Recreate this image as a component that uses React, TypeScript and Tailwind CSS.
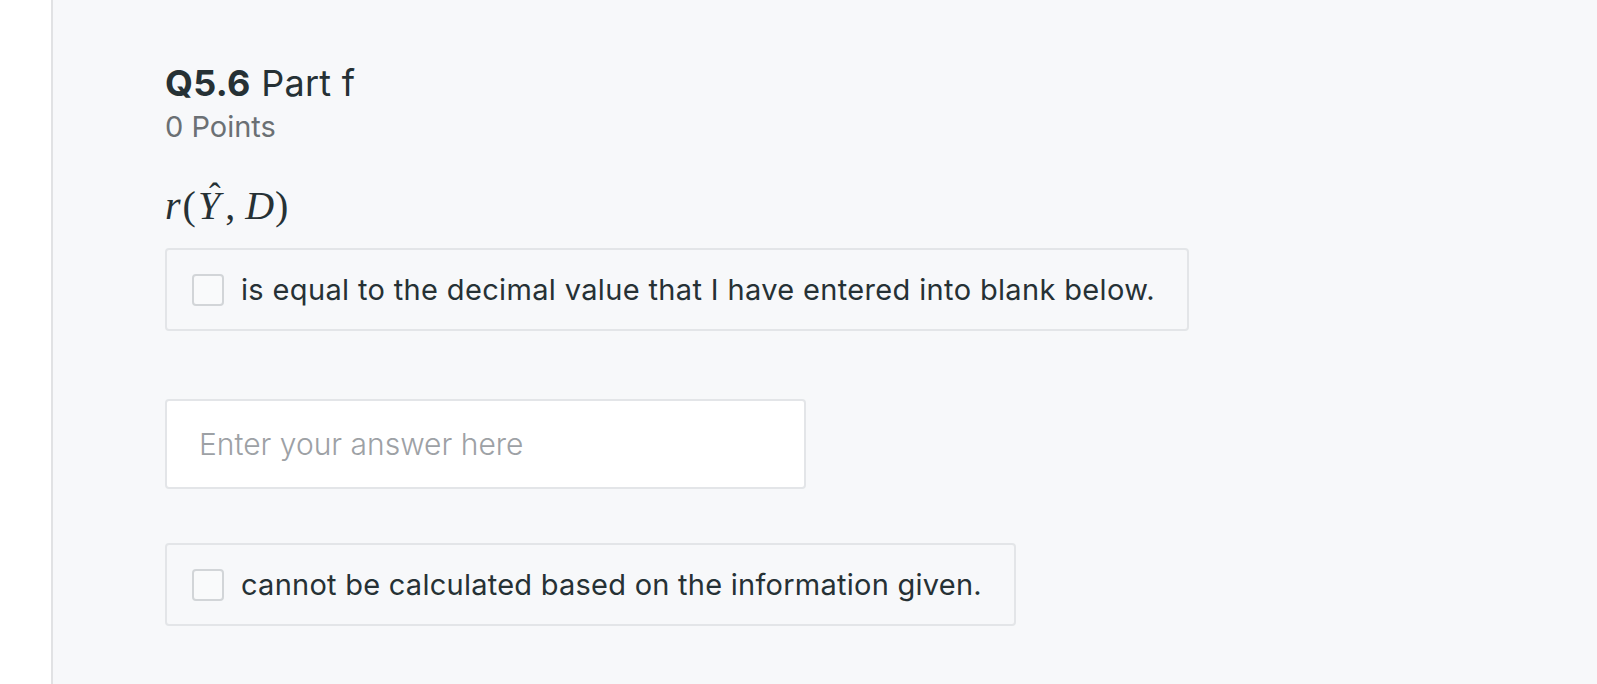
import React from "react";

function Checkbox() {
  return (
    <div className="w-[32px] h-[32px] shrink-0 rounded-[4px] border-2 border-[#d2d5d8] bg-[#f9fafb]" />
  );
}

function Option({ text, width, size }: { text: string; width: string; size: string }) {
  return (
    <div
      className={`${width} h-[83px] flex items-center gap-[17px] pl-[25px] rounded-[4px] border-2 border-[#e3e5e8] bg-[#f7f8fa]`}
    >
      <Checkbox />
      <span className={`${size} leading-[34px] text-[#263135]`}>{text}</span>
    </div>
  );
}

export default function App() {
  return (
    <div
      className="flex min-h-screen w-full"
      style={{ fontFamily: "Inter, 'Liberation Sans', sans-serif" }}
    >
      <div className="w-[53px] shrink-0 bg-white border-r-2 border-[#e1e2e4]" />
      <div className="flex-1 bg-[#f7f8fa] pl-[112px] pt-[62px] flex flex-col items-start">
        <div className="text-[36px] leading-[42px] tracking-[0.3px] text-[#263135]">
          <span className="font-bold">Q5.6</span>
          <span> Part f</span>
        </div>
        <div className="mt-[6px] text-[29px] leading-[34px] text-[#6b7074]">0 Points</div>
        <div
          className="mt-[39px] text-[40px] leading-[46px] text-[#263135] flex items-baseline"
          style={{ fontFamily: "'Liberation Serif', 'DejaVu Serif', serif" }}
        >
          <span className="italic">r</span>
          <span className="ml-[2px]">(</span>
          <span className="relative italic ml-[2px]">
            Y
            <span className="absolute left-[11px] top-[-9px] not-italic text-[35px]">ˆ</span>
          </span>
          <span className="ml-[5px]">,</span>
          <span className="italic ml-[10px]">D</span>
          <span className="ml-[1px]">)</span>
        </div>
        <div className="mt-[19px]">
          <Option
            width="w-[1024px]"
            size="text-[29px] tracking-[0.35px]"
            text="is equal to the decimal value that I have entered into blank below."
          />
        </div>
        <div className="mt-[68px] w-[641px] h-[90px] rounded-[4px] border-2 border-[#e3e5e8] bg-white flex items-center pl-[32px]">
          <span className="text-[30px] font-light text-[#9da1a5]">Enter your answer here</span>
        </div>
        <div className="mt-[54px]">
          <Option
            width="w-[851px]"
            size="text-[29px] tracking-[0.25px]"
            text="cannot be calculated based on the information given."
          />
        </div>
      </div>
    </div>
  );
}
